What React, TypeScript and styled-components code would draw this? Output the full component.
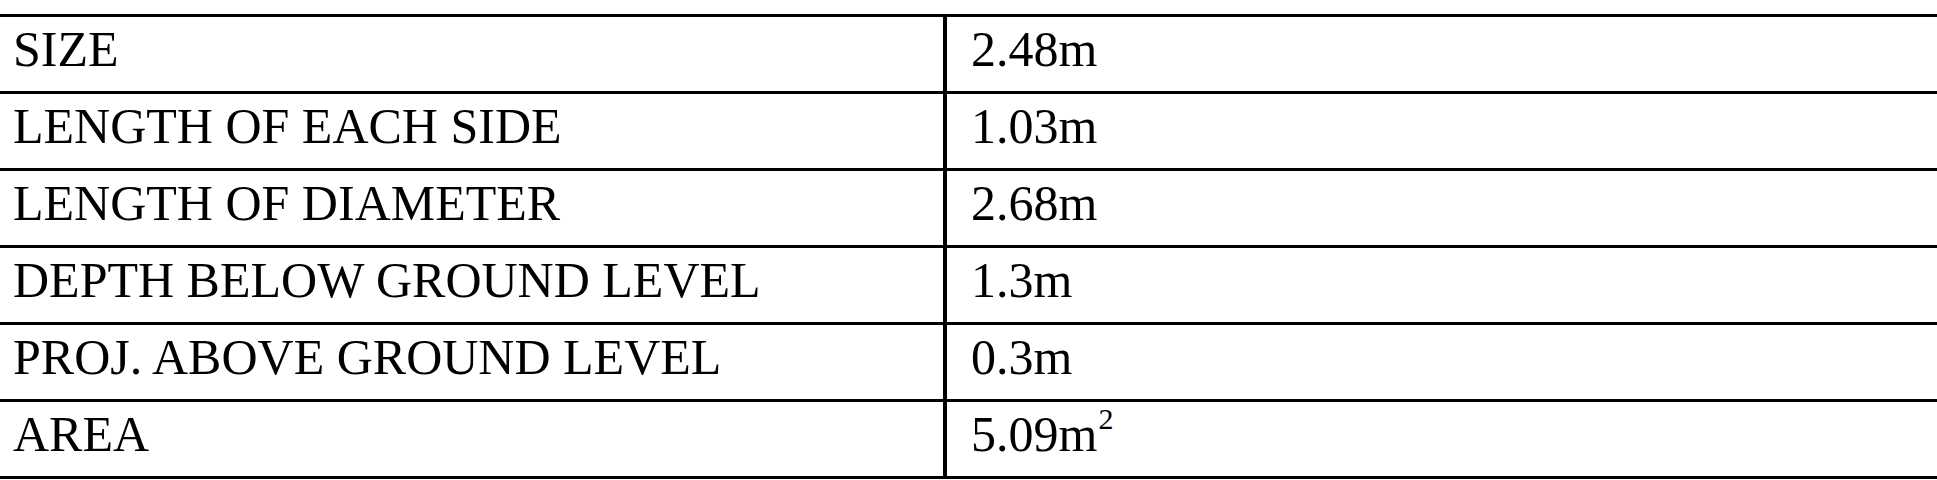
import React from 'react'
import styled, { createGlobalStyle } from 'styled-components'

const GlobalStyle = createGlobalStyle`
  html, body {
    margin: 0;
    padding: 0;
    background: #ffffff;
  }
  body {
    font-family: "Liberation Serif", "Times New Roman", serif;
    color: #000000;
  }
`

const Page = styled.div`
  padding-top: 14px;
  width: 1937px;
  overflow: hidden;
`

const SpecTable = styled.table`
  width: 100%;
  border-collapse: collapse;
  table-layout: fixed;
`

const Row = styled.tr`
  border-top: 3px solid #000;
  border-bottom: 3px solid #000;
`

const Cell = styled.td<{ $value?: boolean }>`
  height: 77px;
  padding: 7px 0 0 ${(p) => (p.$value ? '24px' : '13px')};
  vertical-align: top;
  box-sizing: border-box;
  font-size: 50px;
  line-height: 50px;
  white-space: nowrap;
  border-left: ${(p) => (p.$value ? '4px solid #000' : 'none')};
`

const LabelCol = styled.col`
  width: 945px;
`

const Sup = styled.span`
  font-size: 30px;
  line-height: 0;
  vertical-align: 22px;
  margin-left: 1px;
`

type Spec = { label: string; value: string; sup?: string }

const specs: Spec[] = [
  { label: 'SIZE', value: '2.48m' },
  { label: 'LENGTH OF EACH SIDE', value: '1.03m' },
  { label: 'LENGTH OF DIAMETER', value: '2.68m' },
  { label: 'DEPTH BELOW GROUND LEVEL', value: '1.3m' },
  { label: 'PROJ. ABOVE GROUND LEVEL', value: '0.3m' },
  { label: 'AREA', value: '5.09m', sup: '2' },
]

export default function App() {
  return (
    <Page>
      <GlobalStyle />
      <SpecTable>
        <colgroup>
          <LabelCol />
          <col />
        </colgroup>
        <tbody>
          {specs.map((s) => (
            <Row key={s.label}>
              <Cell>{s.label}</Cell>
              <Cell $value>
                {s.value}
                {s.sup && <Sup>{s.sup}</Sup>}
              </Cell>
            </Row>
          ))}
        </tbody>
      </SpecTable>
    </Page>
  )
}
